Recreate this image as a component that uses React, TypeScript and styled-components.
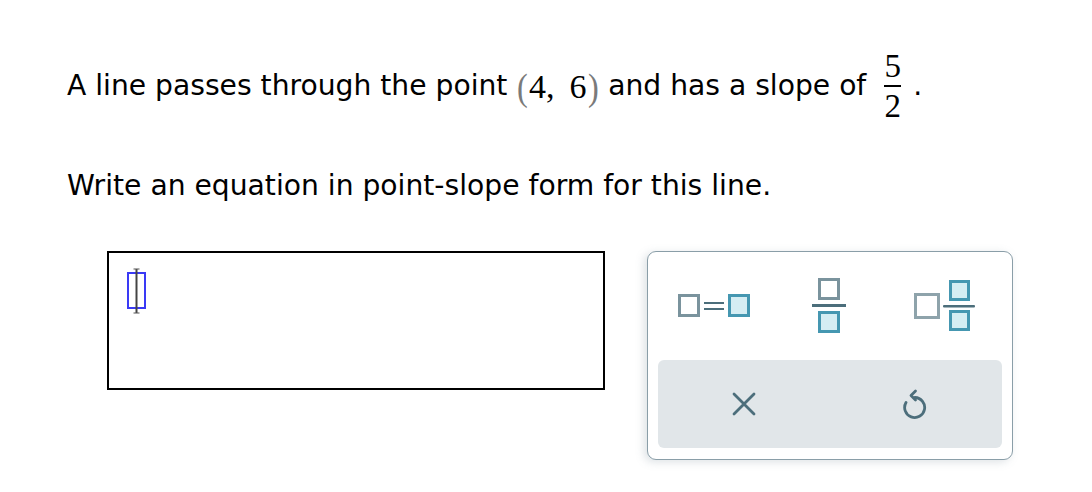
import React from "react";
import styled, { createGlobalStyle } from "styled-components";

const Global = createGlobalStyle`
  html, body { margin: 0; padding: 0; background: #fff; }
  body { font-family: "DejaVu Sans", Verdana, sans-serif; color: #000; }
`;

const Page = styled.div`
  padding: 50px 0 0 67px;
  width: 1092px;
  height: 492px;
  box-sizing: border-box;
`;

const Para = styled.p<{ $mt?: number }>`
  margin: ${(p) => p.$mt ?? 0}px 0 0 0;
  font-size: 28.2px;
  line-height: 28px;
  display: flex;
  align-items: center;
  white-space: pre;
`;

const MathText = styled.span`
  font-family: "Liberation Serif", "Times New Roman", serif;
  font-size: 34px;
  display: inline-flex;
  align-items: center;
  margin-top: 2px;
`;

const Paren = styled.span`
  color: #7a7a7a;
  font-size: 38px;
  display: inline-block;
  transform: scaleX(0.85);
`;

const Gap = styled.span<{ $w: number }>`
  display: inline-block;
  width: ${(p) => p.$w}px;
`;

const Frac = styled.span`
  display: inline-flex;
  flex-direction: column;
  align-items: center;
  font-family: "Liberation Serif", "Times New Roman", serif;
  font-size: 33px;
  line-height: 32px;
  margin: 0 12px 0 18px;
`;

const FracBar = styled.span`
  width: 17px;
  height: 1.5px;
  background: #000;
  margin: 3px 0 3px;
`;

const Row = styled.div`
  display: flex;
  align-items: flex-start;
  margin-top: 51px;
  margin-left: 40px;
  gap: 42px;
`;

const Answer = styled.div`
  width: 498px;
  height: 139px;
  box-sizing: border-box;
  border: 2px solid #000;
  padding: 15px 0 0 16px;
`;

const Panel = styled.div`
  width: 366px;
  height: 209px;
  box-sizing: border-box;
  border: 1.5px solid #8a9ea8;
  border-radius: 9px;
  box-shadow: -3px 2px 8px rgba(120, 140, 150, 0.25);
  padding: 0 10px 10px;
  display: flex;
  flex-direction: column;
  background: #fff;
`;

const Grid = styled.div<{ $cols: number }>`
  display: grid;
  grid-template-columns: repeat(${(p) => p.$cols}, 1fr);
  align-items: center;
  justify-items: center;
`;

const TopGrid = styled(Grid)`
  height: 108px;
`;

const Keys = styled(Grid)`
  height: 88px;
  background: #e1e6e9;
  border-radius: 6px;
`;

const Icon = styled.svg`
  display: block;
`;

const Cursor = () => (
  <Icon width="22" height="52" viewBox="0 0 22 52">
    <rect x="3" y="5" width="17" height="35" fill="none" stroke="#3a3af5" strokeWidth="2" />
    <line x1="11.5" y1="1" x2="11.5" y2="45" stroke="#444" strokeWidth="2" />
    <path d="M8.5 1 L14.5 1 M8.5 45 L14.5 45" stroke="#555" strokeWidth="1.2" />
  </Icon>
);

const GRAY = "#7a939d";
const TEAL = "#4597b1";
const FILL = "#d5edf3";
const DARK = "#4c6e7b";

const EqIcon = () => (
  <Icon width="74" height="24" viewBox="0 0 74 24">
    <rect x="1.5" y="1.5" width="19" height="20" fill="#fff" stroke={GRAY} strokeWidth="3" />
    <rect x="26" y="8" width="20" height="2" fill={DARK} />
    <rect x="26" y="14" width="20" height="2" fill={DARK} />
    <rect x="51.5" y="1.5" width="19" height="20" fill={FILL} stroke={TEAL} strokeWidth="3" />
  </Icon>
);

const FracIcon = () => (
  <Icon width="36" height="56" viewBox="0 0 36 56">
    <rect x="7.5" y="1.5" width="19" height="19" fill="#fff" stroke={GRAY} strokeWidth="3" />
    <rect x="0" y="26" width="34" height="3" fill={DARK} />
    <rect x="7.5" y="34.5" width="19" height="19" fill={FILL} stroke={TEAL} strokeWidth="3" />
  </Icon>
);

const MixedIcon = () => (
  <Icon width="64" height="52" viewBox="0 0 64 52">
    <rect x="2.5" y="14.5" width="23" height="23" fill="#fff" stroke="#8ea3ab" strokeWidth="3" />
    <rect x="30" y="25" width="32" height="2.5" rx="1" fill={DARK} />
    <rect x="37.5" y="1.5" width="18" height="18" fill={FILL} stroke={TEAL} strokeWidth="3" />
    <rect x="37.5" y="31.5" width="18" height="18" fill={FILL} stroke={TEAL} strokeWidth="3" />
  </Icon>
);

const XIcon = () => (
  <Icon width="26" height="26" viewBox="0 0 26 26">
    <path d="M3 3 L23 23 M23 3 L3 23" stroke={DARK} strokeWidth="2.8" strokeLinecap="round" />
  </Icon>
);

const UndoIcon = () => (
  <Icon width="28" height="32" viewBox="0 0 28 32">
    <path
      d="M13 9.5 A10 10 0 1 1 4 14.5"
      fill="none"
      stroke={DARK}
      strokeWidth="2.8"
      strokeLinecap="round"
    />
    <path d="M13.5 3 L9 7.5 L13.5 12" fill="none" stroke={DARK} strokeWidth="2.8" strokeLinecap="round" strokeLinejoin="round" />
  </Icon>
);

export default function App() {
  return (
    <>
      <Global />
      <Page>
        <Para>
          {"A line passes through the point "}
          <MathText>
            <Paren>(</Paren>
            <span>4,</span>
            <Gap $w={15} />
            <span>6</span>
            <Paren>)</Paren>
          </MathText>
          {" and has a slope of"}
          <Frac>
            <span>5</span>
            <FracBar />
            <span>2</span>
          </Frac>
          .
        </Para>
        <Para $mt={50}>Write an equation in point-slope form for this line.</Para>
        <Row>
          <Answer>
            <Cursor />
          </Answer>
          <Panel>
            <TopGrid $cols={3}>
              <EqIcon />
              <FracIcon />
              <MixedIcon />
            </TopGrid>
            <Keys $cols={2}>
              <XIcon />
              <UndoIcon />
            </Keys>
          </Panel>
        </Row>
      </Page>
    </>
  );
}
